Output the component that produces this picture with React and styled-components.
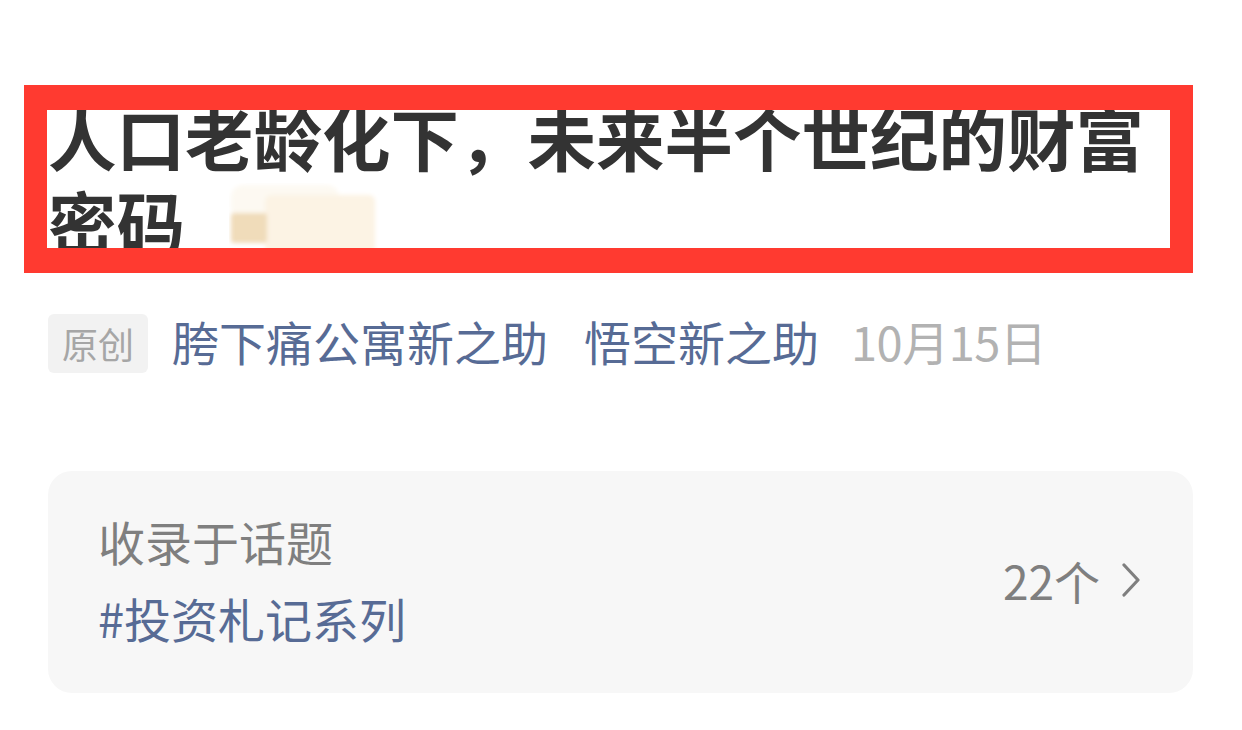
import React from "react";
import styled, { createGlobalStyle } from "styled-components";

const GlobalStyle = createGlobalStyle`
  html, body {
    margin: 0;
    padding: 0;
    background: #fff;
  }
  body {
    font-family: "Noto Sans CJK SC", "Noto Sans", sans-serif;
  }
`;

const Page = styled.div`
  width: 1242px;
  height: 730px;
  box-sizing: border-box;
  padding: 95px 49px 0 48px;
  overflow: hidden;
  background: #fff;
`;

const TitleWrap = styled.div`
  position: relative;
`;

const Title = styled.h1`
  margin: 0;
  font-size: 68.5px;
  line-height: 84px;
  font-weight: 600;
  color: #333;
  letter-spacing: 0;
`;

const Sticker = styled.svg`
  display: inline-block;
  vertical-align: top;
  margin: 4px 0 0 44px;
`;

// red highlight frame drawn over the headline
const Highlight = styled.div`
  position: absolute;
  left: -24px;
  right: 0;
  top: -10px;
  height: 188px;
  box-sizing: border-box;
  border: solid #ff3a30;
  border-width: 25px 23px;
  pointer-events: none;
`;

const Meta = styled.div`
  display: flex;
  align-items: center;
  margin-top: 51px;
  height: 59px;
  font-size: 47px;
  line-height: 59px;
`;

const Tag = styled.span`
  display: inline-flex;
  align-items: center;
  justify-content: center;
  width: 100px;
  height: 59px;
  border-radius: 6px;
  background: #f2f2f2;
  color: #a6a6a6;
  font-size: 36px;
  margin-right: 24px;
`;

const Author = styled.span`
  color: #576b95;
  margin: 0 ${({ gap }) => gap}px 6px 0;
`;

const Date = styled.span`
  color: #b2b2b2;
  margin-bottom: 6px;
  letter-spacing: -0.5px;
`;

const TopicCard = styled.div`
  display: flex;
  align-items: center;
  justify-content: space-between;
  margin-top: 98px;
  height: 222px;
  box-sizing: border-box;
  padding: 0 53px 0 50px;
  border-radius: 24px;
  background: #f7f7f7;
`;

const TopicText = styled.div`
  display: flex;
  flex-direction: column;
  margin-bottom: 6px;
  font-size: 47px;
  line-height: 77px;
`;

const TopicLabel = styled.span`
  color: #7f7f7f;
`;

const TopicName = styled.span`
  color: #576b95;
`;

const Count = styled.div`
  display: flex;
  align-items: center;
  gap: 22px;
  margin-bottom: 4px;
  color: #7f7f7f;
  font-size: 46px;
  line-height: 60px;
`;

const Chevron = () => (
  <svg width="18" height="34" viewBox="0 0 18 34">
    <polyline
      points="2,2 16,17 2,32"
      fill="none"
      stroke="#7f7f7f"
      strokeWidth="3.2"
      strokeLinecap="round"
      strokeLinejoin="round"
    />
  </svg>
);

export default function App() {
  return (
    <Page>
      <GlobalStyle />
      <TitleWrap>
        <Title>
          人口老龄化下，未来半个世纪的财富密码
          <Sticker width="150" height="70" viewBox="0 0 150 70">
            <defs>
              <filter id="soft" x="-20%" y="-20%" width="140%" height="140%">
                <feGaussianBlur stdDeviation="2" />
              </filter>
            </defs>
            <g filter="url(#soft)">
              <rect x="2" y="2" width="108" height="34" rx="12" fill="#fdf9f2" />
              <rect x="36" y="12" width="110" height="58" rx="6" fill="#fcf3e4" />
              <rect x="2" y="30" width="36" height="30" rx="3" fill="#f0dcba" />
            </g>
          </Sticker>
        </Title>
        <Highlight />
      </TitleWrap>

      <Meta>
        <Tag>原创</Tag>
        <Author gap={36}>胯下痛公寓新之助</Author>
        <Author gap={32}>悟空新之助</Author>
        <Date>10月15日</Date>
      </Meta>

      <TopicCard>
        <TopicText>
          <TopicLabel>收录于话题</TopicLabel>
          <TopicName>#投资札记系列</TopicName>
        </TopicText>
        <Count>
          <span>22个</span>
          <Chevron />
        </Count>
      </TopicCard>
    </Page>
  );
}
